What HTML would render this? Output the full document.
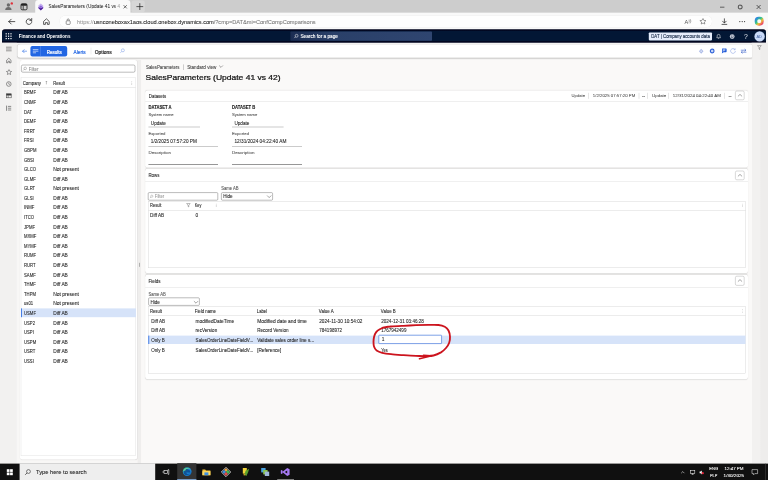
<!DOCTYPE html>
<html lang="en">
<head>
<meta charset="utf-8">
<title>SalesParameters (Update 41 vs 42)</title>
<style>
html,body{margin:0;padding:0;width:768px;height:480px;overflow:hidden;background:#f7f6f4;}
#s{position:absolute;left:0;top:0;width:1920px;height:1200px;transform:scale(.4);transform-origin:0 0;
  font-family:"Liberation Sans",sans-serif;font-size:12.5px;color:#242424;background:#f8f7f6;overflow:hidden;}
#s *{box-sizing:border-box;}
.a{position:absolute;}
.t{position:absolute;white-space:nowrap;line-height:1;-webkit-text-stroke:0.2px;}
.card{position:absolute;background:#fff;border-radius:6px;box-shadow:0 0 2.5px rgba(0,0,0,.13);}
.hl{position:absolute;height:1px;background:#d6d6d6;}
.ul{position:absolute;height:1.5px;background:#7a7a7a;}
.sep{position:absolute;width:1px;background:#c8c8c8;}
svg{overflow:visible;}
</style>
</head>
<body>
<div id="s">
<!-- ===== Browser tab strip ===== -->
<div class="a" style="left:0.0px;top:0.0px;width:1920.0px;height:32.0px;background:#cdcdcd;"></div>
<div class="a" style="left:329.0px;top:1.0px;width:33.0px;height:29.5px;background:#d7d7d7;border-radius:5px;"></div>
<div class="a" style="left:87.5px;top:0.0px;width:238.8px;height:33.0px;background:#f9f9f9;border-radius:8px 8px 0 0;"></div>
<svg class="a" style="left:10.0px;top:5.0px;" width="22" height="22" viewBox="0 0 22 22"><circle cx="11" cy="7.5" r="4.2" fill="#6b6b6b"/><path d="M3 20c0-5 3.5-7.5 8-7.5s8 2.500 8 7.500z" fill="#6b6b6b"/><circle cx="19.500" cy="3.500" r="3" fill="#e0303a"/></svg>
<svg class="a" style="left:50.5px;top:7.5px;" width="18" height="18" viewBox="0 0 18 18"><rect x="1.500" y="1.500" width="15" height="15" rx="3" fill="none" stroke="#222" stroke-width="2.200"/><rect x="1.500" y="1.500" width="15" height="5" rx="2" fill="#222"/><line x1="7" y1="6" x2="7" y2="16" stroke="#222" stroke-width="2"/></svg>
<svg class="a" style="left:95.5px;top:8.5px;" width="12" height="17" viewBox="0 0 12 17"><path d="M6 0l6 4.500v5L6 14 0 9.500v-5z" fill="#c4aef0"/><path d="M0 8.500l6 3 6-3v3L6 17 0 11.500z" fill="#4f1f9e"/><path d="M6 5l4 3-4 3.500L2 8z" fill="#8a63d9"/></svg>
<div class="t" style="left:120.5px;top:10px;font-size:12px;color:#1f1f1f;-webkit-text-stroke:0.1px;width:188px;overflow:hidden;-webkit-mask-image:linear-gradient(90deg,#000 86%,transparent);mask-image:linear-gradient(90deg,#000 86%,transparent);">SalesParameters (Update 41 vs 4</div>
<svg class="a" style="left:307.5px;top:12.0px;" width="10" height="10" viewBox="0 0 10 10"><path d="M1 1l8 8M9 1l-8 8" stroke="#222" stroke-width="1.600" fill="none"/></svg>
<svg class="a" style="left:340.5px;top:7.5px;" width="17" height="17" viewBox="0 0 17 17"><path d="M8.500 0v17M0 8.500h17" stroke="#222" stroke-width="1.800" fill="none"/></svg>
<svg class="a" style="left:1799.5px;top:16.5px;" width="11" height="2" viewBox="0 0 11 2"><rect width="11" height="1.600" fill="#222"/></svg>
<svg class="a" style="left:1845.0px;top:11.8px;" width="11" height="11" viewBox="0 0 11 11"><rect x="1" y="1" width="9" height="9" rx="2.500" fill="none" stroke="#222" stroke-width="2"/></svg>
<svg class="a" style="left:1891.0px;top:12.0px;" width="11" height="11" viewBox="0 0 11 11"><path d="M0.500 0.500l10 10M10.500 0.500l-10 10" stroke="#222" stroke-width="1.700" fill="none"/></svg>
<!-- ===== Browser toolbar ===== -->
<div class="a" style="left:0.0px;top:31.5px;width:1920.0px;height:41.5px;background:#f9f9f9;"></div>
<div class="a" style="left:148.5px;top:39.0px;width:1631.5px;height:29.0px;background:#fefefe;border-radius:14px;box-shadow:0 0 1px rgba(0,0,0,.12);"></div>
<svg class="a" style="left:19.8px;top:46.8px;" width="18" height="14" viewBox="0 0 18 14"><path d="M17 7H2M8 1L2 7l6 6" stroke="#222" stroke-width="1.900" fill="none" stroke-linecap="round" stroke-linejoin="round"/></svg>
<svg class="a" style="left:64.0px;top:45.0px;" width="17" height="17" viewBox="0 0 17 17"><path d="M14.500 5.500A7 7 0 1 0 15.500 9" stroke="#222" stroke-width="1.900" fill="none" stroke-linecap="round"/><path d="M15.300 1.200v4.800h-4.800" stroke="#222" stroke-width="1.900" fill="none" stroke-linecap="round" stroke-linejoin="round"/></svg>
<svg class="a" style="left:107.2px;top:45.0px;" width="18" height="17" viewBox="0 0 18 17"><path d="M2 8.500L9 2l7 6.500V16h-4.500v-4.500h-5V16H2z" stroke="#222" stroke-width="1.800" fill="none" stroke-linejoin="round"/></svg>
<svg class="a" style="left:163.5px;top:46.0px;" width="13" height="16" viewBox="0 0 13 16"><rect x="1.500" y="6" width="10" height="9" rx="2" fill="none" stroke="#555" stroke-width="1.500"/><path d="M3.800 6V4a2.700 2.700 0 0 1 5.400 0v2" fill="none" stroke="#555" stroke-width="1.500"/></svg>
<div class="t" style="left:192.5px;top:48px;font-size:14.25px;color:#242424;letter-spacing:-0.15px;-webkit-text-stroke:0.12px;"><span style="color:#9a9a9a">https://</span><span style="color:#1b1b1b">usnconeboxax1aos.cloud.onebox.dynamics.com</span><span style="color:#767676">/?cmp=DAT&amp;mi=ConfCompComparisons</span></div>
<svg class="a" style="left:1710.5px;top:45.8px;" width="17" height="15" viewBox="0 0 17 15"><text x="0" y="13" font-family="Liberation Sans,sans-serif" font-size="14" fill="#555">A</text><path d="M11 3.500q3 3 0 7M14 1.500q4.500 5 0 11" stroke="#555" stroke-width="1.200" fill="none"/></svg>
<svg class="a" style="left:1749.0px;top:45.2px;" width="17" height="16" viewBox="0 0 17 16"><path d="M8.500 1.300l2.200 4.700 5.100.600-3.800 3.500 1 5-4.500-2.500-4.500 2.500 1-5L.7 6.600l5.100-.6z" stroke="#555" stroke-width="1.400" fill="none" stroke-linejoin="round"/></svg>
<svg class="a" style="left:1804.2px;top:45.8px;" width="14" height="16" viewBox="0 0 14 16"><path d="M7 1v10M2.500 7L7 11.500 11.500 7M1 15h12" stroke="#222" stroke-width="1.800" fill="none" stroke-linecap="round" stroke-linejoin="round"/></svg>
<svg class="a" style="left:1848.0px;top:52.0px;" width="15" height="4" viewBox="0 0 15 4"><circle cx="1.500" cy="2" r="1.400" fill="#222"/><circle cx="7.500" cy="2" r="1.400" fill="#222"/><circle cx="13.500" cy="2" r="1.400" fill="#222"/></svg>
<svg class="a" style="left:1885.5px;top:41.0px;" width="24" height="24" viewBox="0 0 24 24"><defs><linearGradient id="cp" x1="0" y1="0" x2="1" y2="1"><stop offset="0" stop-color="#2b7fe8"/><stop offset=".4" stop-color="#35c58a"/><stop offset=".65" stop-color="#f2c035"/><stop offset="1" stop-color="#e8356f"/></linearGradient></defs><rect x="4" y="4" width="16" height="16" rx="7" fill="none" stroke="url(#cp)" stroke-width="6.500"/></svg>
<!-- ===== Finance and Operations header ===== -->
<div class="a" style="left:5.0px;top:73.0px;width:1910.0px;height:33.8px;background:linear-gradient(180deg,#01041d 0,#01041d 3px,#031735 4.500px,#031735 28.500px,#01051f 30.500px,#01051f 100%);border-radius:7px 7px 0 0;"></div>
<svg class="a" style="left:13.8px;top:82.5px;" width="15" height="15" viewBox="0 0 15 15"><rect x="0" y="0" width="3" height="3" fill="#fff"/><rect x="0" y="6" width="3" height="3" fill="#fff"/><rect x="0" y="12" width="3" height="3" fill="#fff"/><rect x="6" y="0" width="3" height="3" fill="#fff"/><rect x="6" y="6" width="3" height="3" fill="#fff"/><rect x="6" y="12" width="3" height="3" fill="#fff"/><rect x="12" y="0" width="3" height="3" fill="#fff"/><rect x="12" y="6" width="3" height="3" fill="#fff"/><rect x="12" y="12" width="3" height="3" fill="#fff"/></svg>
<div class="t" style="left:47.0px;top:85px;font-size:12.5px;color:#fff;font-weight:bold;-webkit-text-stroke:0;transform:scaleX(0.906);transform-origin:0 50%;">Finance and Operations</div>
<div class="a" style="left:725.5px;top:79.0px;width:354.5px;height:23.0px;background:linear-gradient(90deg,#1b2c52,#2a4069 30%,#2f4570);border-radius:2px;"></div>
<svg class="a" style="left:735.0px;top:84.8px;" width="11" height="11" viewBox="0 0 11 11"><circle cx="6.500" cy="4.500" r="3.600" stroke="#fff" stroke-width="1.300" fill="none"/><path d="M4 7L.8 10.200" stroke="#fff" stroke-width="1.400"/></svg>
<div class="t" style="left:751.0px;top:85px;font-size:12px;color:#fff;-webkit-text-stroke:0.3px #fff;transform:scaleX(0.985);transform-origin:0 50%;">Search for a page</div>
<div class="a" style="left:1622.0px;top:80.5px;width:158.0px;height:20.5px;background:#e6edfb;border-radius:2px;"></div>
<div class="t" style="left:1628.0px;top:85px;font-size:11.5px;color:#031735;transform:scaleX(0.943);transform-origin:0 50%;">DAT | Company accounts data</div>
<svg class="a" style="left:1791.0px;top:84.8px;" width="11" height="12" viewBox="0 0 11 12"><path d="M5.500 1a3.600 3.600 0 0 0-3.600 3.600V7.500L.8 9.300h9.400L9.100 7.500V4.600A3.600 3.600 0 0 0 5.500 1z" stroke="#fff" stroke-width="1.300" fill="none"/><path d="M4.200 10.500a1.400 1.400 0 0 0 2.600 0" stroke="#fff" stroke-width="1.200" fill="none"/></svg>
<svg class="a" style="left:1823.5px;top:84.5px;" width="13" height="13" viewBox="0 0 13 13"><circle cx="6.500" cy="6.500" r="6" fill="#c5cad6"/><circle cx="4.300" cy="5" r="1" fill="#031735"/><circle cx="8.700" cy="5" r="1" fill="#031735"/><path d="M3.500 7.800q3 2.800 6 0" stroke="#031735" stroke-width="1.200" fill="none"/></svg>
<div class="t" style="left:1859.8px;top:84px;font-size:17px;color:#e8eaf0;-webkit-text-stroke:0;">?</div>
<div class="a" style="left:1885.8px;top:77.5px;width:26.5px;height:26.5px;background:#c9daf8;border-radius:50%;"></div>
<div class="t" style="left:1891.0px;top:86px;font-size:10px;color:#3f5f9f;letter-spacing:-0.3px;-webkit-text-stroke:0;">AD</div>
<!-- ===== navigation rail ===== -->
<div class="a" style="left:0.0px;top:106.8px;width:41.5px;height:1051.2px;background:#f2f1f0;"></div>
<div class="a" style="left:1879.0px;top:106.8px;width:41.0px;height:1051.2px;background:linear-gradient(90deg,#f2f1f0 0,#f2f1f0 52%,#eeedec 56%,#eeedec 100%);"></div>
<svg class="a" style="left:15.0px;top:117.0px;" width="14" height="11" viewBox="0 0 14 11"><path d="M0 1h14M0 5.500h14M0 10h14" stroke="#3b3b3b" stroke-width="1.300"/></svg>
<svg class="a" style="left:15.0px;top:143.5px;" width="14" height="14" viewBox="0 0 14 14"><path d="M1.500 6.500L7 1.500l5.500 5V13h-3.700V9H5.200v4H1.500z" stroke="#3b3b3b" stroke-width="1.300" fill="none" stroke-linejoin="round"/></svg>
<svg class="a" style="left:14.5px;top:173.0px;" width="15" height="14" viewBox="0 0 15 14"><path d="M7.500 1l1.900 4.200 4.600.500-3.400 3.100.9 4.500-4-2.300-4 2.300.9-4.500L1 5.700l4.600-.5z" stroke="#3b3b3b" stroke-width="1.200" fill="none" stroke-linejoin="round"/></svg>
<svg class="a" style="left:15.0px;top:203.0px;" width="14" height="14" viewBox="0 0 14 14"><circle cx="7" cy="7" r="5.800" stroke="#3b3b3b" stroke-width="1.300" fill="none"/><path d="M7 3.500V7.300l2.500 1.500" stroke="#3b3b3b" stroke-width="1.300" fill="none"/></svg>
<svg class="a" style="left:15.0px;top:232.5px;" width="14" height="13" viewBox="0 0 14 13"><rect x="1" y="1.500" width="12" height="10" stroke="#3b3b3b" stroke-width="1.300" fill="none"/><path d="M1 5h12M5.500 5v6.500" stroke="#3b3b3b" stroke-width="1.300"/><rect x="1" y="1.500" width="12" height="3.500" fill="#3b3b3b"/></svg>
<svg class="a" style="left:15.0px;top:263.5px;" width="14" height="13" viewBox="0 0 14 13"><path d="M1.500 0v13" stroke="#3b3b3b" stroke-width="1.500"/><path d="M5 2h8M5 6.500h8M5 11h8" stroke="#3b3b3b" stroke-width="1.400"/></svg>
<svg class="a" style="left:1893.2px;top:112.8px;" width="11" height="12" viewBox="0 0 11 12"><path d="M.8 1h9.400L6.500 5.600V11L4.500 9.600V5.600z" stroke="#555" stroke-width="1.100" fill="none" stroke-linejoin="round"/></svg>
<!-- ===== action bar ===== -->
<div class="a" style="left:44.0px;top:111.0px;width:1835.5px;height:33.0px;background:#fff;border-radius:6px 3px 3px 6px;box-shadow:0 1px 3px rgba(0,0,0,.16);"></div>
<svg class="a" style="left:54.5px;top:122.5px;" width="12" height="10" viewBox="0 0 12 10"><path d="M11.500 5H1.500M5.500 1L1.500 5l4 4" stroke="#2266e3" stroke-width="1.400" fill="none" stroke-linecap="round" stroke-linejoin="round"/></svg>
<div class="a" style="left:76.0px;top:115.2px;width:92.0px;height:26.2px;background:#2266e3;border-radius:5px;"></div>
<svg class="a" style="left:81.5px;top:122.8px;" width="14" height="10" viewBox="0 0 14 10"><path d="M0 1h14M0 5h14M0 9h8" stroke="#fff" stroke-width="1.500"/></svg>
<div class="a" style="left:100.0px;top:115.2px;width:1.0px;height:26.2px;background:#6f9cf0;"></div>
<div class="t" style="left:116.5px;top:125px;font-size:12px;color:#fff;-webkit-text-stroke:0.5px #fff;transform:scaleX(0.937);transform-origin:0 50%;">Results</div>
<div class="t" style="left:183.8px;top:125px;font-size:12px;color:#2266e3;-webkit-text-stroke:0.45px #2266e3;transform:scaleX(0.978);transform-origin:0 50%;">Alerts</div>
<div class="a" style="left:227.0px;top:118.8px;width:1.0px;height:17.5px;background:#d8d8d8;"></div>
<div class="t" style="left:237.2px;top:125px;font-size:12px;color:#242424;-webkit-text-stroke:0.5px #242424;transform:scaleX(1.022);transform-origin:0 50%;">Options</div>
<svg class="a" style="left:299.8px;top:121.0px;" width="12" height="12" viewBox="0 0 12 12"><circle cx="7.200" cy="4.800" r="3.800" stroke="#7d9fe6" stroke-width="1.300" fill="none"/><path d="M4.500 7.500L1 11" stroke="#7d9fe6" stroke-width="1.400"/></svg>
<svg class="a" style="left:1746.0px;top:120.5px;" width="14" height="14" viewBox="0 0 14 14"><path d="M7 .8l5.800 6.200L7 13.200 1.200 7z" fill="#aebde8"/><circle cx="7" cy="7" r="2.200" fill="#d5ddf4"/></svg>
<svg class="a" style="left:1774.2px;top:121.0px;" width="13" height="13" viewBox="0 0 13 13"><circle cx="6.500" cy="6.500" r="4.600" fill="#c9d8f7" stroke="#2f62d8" stroke-width="2.800"/></svg>
<svg class="a" style="left:1803.0px;top:119.5px;" width="14" height="15" viewBox="0 0 14 15"><path d="M2.500 1h9.500a1.500 1.500 0 0 1 1.500 1.500v6.500a1.500 1.500 0 0 1-1.500 1.500H6l-4.500 3.500 1-4.500V2.500A1.500 1.500 0 0 1 2.500 1z" fill="#1e58d8"/><path d="M6 8.500V3.200h2.300a1.700 1.700 0 0 1 0 3.400H6" stroke="#fff" stroke-width="1.400" fill="none"/></svg>
<svg class="a" style="left:1824.8px;top:120.0px;" width="15" height="15" viewBox="0 0 15 15"><path d="M12.300 3.800A6 6 0 1 0 13.500 7.500" stroke="#7f9be0" stroke-width="1.300" fill="none"/><path d="M13 .8v3.600H9.400" stroke="#7f9be0" stroke-width="1.300" fill="none"/></svg>
<svg class="a" style="left:1852.2px;top:121.5px;" width="14" height="12" viewBox="0 0 14 12"><path d="M0 3.500h13M9.500.5l3.500 3-3.500 3M14 8.500H1M4.500 5.500L1 8.500l3.500 3" stroke="#2a55c4" stroke-width="1.400" fill="none"/></svg>
<!-- ===== company list pane ===== -->
<div class="card" style="left:50.0px;top:149.5px;width:293.0px;height:999.0px;"></div>
<div class="a" style="left:344.0px;top:149.5px;width:8.5px;height:1009.5px;background:#efeeed;"></div>
<div class="a" style="left:347.5px;top:656.5px;width:1.2px;height:10.5px;background:#555;"></div>
<div class="a" style="left:53.0px;top:162.2px;width:285.0px;height:19.2px;background:#fff;border:1.5px solid #555;border-radius:4px;"></div>
<svg class="a" style="left:56.5px;top:167.0px;" width="10" height="10" viewBox="0 0 10 10"><circle cx="6" cy="4" r="3.200" stroke="#777" stroke-width="1.100" fill="none"/><path d="M3.800 6.200L.8 9.200" stroke="#777" stroke-width="1.200"/></svg>
<div class="t" style="left:71.5px;top:168px;font-size:12px;color:#8a8a8a;transform:scaleX(0.900);transform-origin:0 50%;">Filter</div>
<div class="a" style="left:52.0px;top:193.2px;width:287.2px;height:947.2px;border:1px solid #dcdcdc;"></div>
<div class="t" style="left:57.0px;top:202px;font-size:12px;color:#242424;transform:scaleX(0.886);transform-origin:0 50%;">Company</div>
<svg class="a" style="left:113.0px;top:201.5px;" width="6" height="10" viewBox="0 0 6 10"><path d="M3 1v8M1 3l2-2 2 2" stroke="#666" stroke-width="1" fill="none"/></svg>
<div class="t" style="left:132.5px;top:202px;font-size:12px;color:#242424;transform:scaleX(0.864);transform-origin:0 50%;">Result</div>
<svg class="a" style="left:327.5px;top:203.0px;" width="3" height="10" viewBox="0 0 3 10"><circle cx="1.500" cy="1.500" r="1" fill="#999"/><circle cx="1.500" cy="5" r="1" fill="#999"/><circle cx="1.500" cy="8.500" r="1" fill="#999"/></svg>
<div class="a" style="left:52.5px;top:217.5px;width:286.5px;height:1.0px;background:#d0d0d0;"></div>
<div class="t" style="left:59.5px;top:225px;font-size:12px;color:#242424;transform:scaleX(0.880);transform-origin:0 50%;">BRMF</div>
<div class="t" style="left:132.5px;top:225px;font-size:12px;color:#242424;transform:scaleX(1.001);transform-origin:0 50%;">Diff AB</div>
<div class="t" style="left:59.5px;top:250px;font-size:12px;color:#242424;transform:scaleX(0.880);transform-origin:0 50%;">CNMF</div>
<div class="t" style="left:132.5px;top:250px;font-size:12px;color:#242424;transform:scaleX(1.001);transform-origin:0 50%;">Diff AB</div>
<div class="t" style="left:59.5px;top:275px;font-size:12px;color:#242424;transform:scaleX(0.880);transform-origin:0 50%;">DAT</div>
<div class="t" style="left:132.5px;top:275px;font-size:12px;color:#242424;transform:scaleX(1.001);transform-origin:0 50%;">Diff AB</div>
<div class="t" style="left:59.5px;top:298px;font-size:12px;color:#242424;transform:scaleX(0.880);transform-origin:0 50%;">DEMF</div>
<div class="t" style="left:132.5px;top:298px;font-size:12px;color:#242424;transform:scaleX(1.001);transform-origin:0 50%;">Diff AB</div>
<div class="t" style="left:59.5px;top:322px;font-size:12px;color:#242424;transform:scaleX(0.880);transform-origin:0 50%;">FRRT</div>
<div class="t" style="left:132.5px;top:322px;font-size:12px;color:#242424;transform:scaleX(1.001);transform-origin:0 50%;">Diff AB</div>
<div class="t" style="left:59.5px;top:345px;font-size:12px;color:#242424;transform:scaleX(0.880);transform-origin:0 50%;">FRSI</div>
<div class="t" style="left:132.5px;top:345px;font-size:12px;color:#242424;transform:scaleX(1.001);transform-origin:0 50%;">Diff AB</div>
<div class="t" style="left:59.5px;top:370px;font-size:12px;color:#242424;transform:scaleX(0.880);transform-origin:0 50%;">GBPM</div>
<div class="t" style="left:132.5px;top:370px;font-size:12px;color:#242424;transform:scaleX(1.001);transform-origin:0 50%;">Diff AB</div>
<div class="t" style="left:59.5px;top:395px;font-size:12px;color:#242424;transform:scaleX(0.880);transform-origin:0 50%;">GBSI</div>
<div class="t" style="left:132.5px;top:395px;font-size:12px;color:#242424;transform:scaleX(1.001);transform-origin:0 50%;">Diff AB</div>
<div class="t" style="left:59.5px;top:418px;font-size:12px;color:#242424;transform:scaleX(0.880);transform-origin:0 50%;">GLCO</div>
<div class="t" style="left:132.5px;top:418px;font-size:12px;color:#242424;transform:scaleX(1.038);transform-origin:0 50%;">Not present</div>
<div class="t" style="left:59.5px;top:442px;font-size:12px;color:#242424;transform:scaleX(0.880);transform-origin:0 50%;">GLMF</div>
<div class="t" style="left:132.5px;top:442px;font-size:12px;color:#242424;transform:scaleX(1.001);transform-origin:0 50%;">Diff AB</div>
<div class="t" style="left:59.5px;top:465px;font-size:12px;color:#242424;transform:scaleX(0.880);transform-origin:0 50%;">GLRT</div>
<div class="t" style="left:132.5px;top:465px;font-size:12px;color:#242424;transform:scaleX(1.038);transform-origin:0 50%;">Not present</div>
<div class="t" style="left:59.5px;top:490px;font-size:12px;color:#242424;transform:scaleX(0.880);transform-origin:0 50%;">GLSI</div>
<div class="t" style="left:132.5px;top:490px;font-size:12px;color:#242424;transform:scaleX(1.001);transform-origin:0 50%;">Diff AB</div>
<div class="t" style="left:59.5px;top:512px;font-size:12px;color:#242424;transform:scaleX(0.880);transform-origin:0 50%;">INMF</div>
<div class="t" style="left:132.5px;top:512px;font-size:12px;color:#242424;transform:scaleX(1.001);transform-origin:0 50%;">Diff AB</div>
<div class="t" style="left:59.5px;top:538px;font-size:12px;color:#242424;transform:scaleX(0.880);transform-origin:0 50%;">ITCO</div>
<div class="t" style="left:132.5px;top:538px;font-size:12px;color:#242424;transform:scaleX(1.001);transform-origin:0 50%;">Diff AB</div>
<div class="t" style="left:59.5px;top:562px;font-size:12px;color:#242424;transform:scaleX(0.880);transform-origin:0 50%;">JPMF</div>
<div class="t" style="left:132.5px;top:562px;font-size:12px;color:#242424;transform:scaleX(1.001);transform-origin:0 50%;">Diff AB</div>
<div class="t" style="left:59.5px;top:585px;font-size:12px;color:#242424;transform:scaleX(0.880);transform-origin:0 50%;">MXMF</div>
<div class="t" style="left:132.5px;top:585px;font-size:12px;color:#242424;transform:scaleX(1.001);transform-origin:0 50%;">Diff AB</div>
<div class="t" style="left:59.5px;top:610px;font-size:12px;color:#242424;transform:scaleX(0.880);transform-origin:0 50%;">MYMF</div>
<div class="t" style="left:132.5px;top:610px;font-size:12px;color:#242424;transform:scaleX(1.001);transform-origin:0 50%;">Diff AB</div>
<div class="t" style="left:59.5px;top:632px;font-size:12px;color:#242424;transform:scaleX(0.880);transform-origin:0 50%;">RUMF</div>
<div class="t" style="left:132.5px;top:632px;font-size:12px;color:#242424;transform:scaleX(1.001);transform-origin:0 50%;">Diff AB</div>
<div class="t" style="left:59.5px;top:658px;font-size:12px;color:#242424;transform:scaleX(0.880);transform-origin:0 50%;">RURT</div>
<div class="t" style="left:132.5px;top:658px;font-size:12px;color:#242424;transform:scaleX(1.001);transform-origin:0 50%;">Diff AB</div>
<div class="t" style="left:59.5px;top:682px;font-size:12px;color:#242424;transform:scaleX(0.880);transform-origin:0 50%;">SAMF</div>
<div class="t" style="left:132.5px;top:682px;font-size:12px;color:#242424;transform:scaleX(1.001);transform-origin:0 50%;">Diff AB</div>
<div class="t" style="left:59.5px;top:705px;font-size:12px;color:#242424;transform:scaleX(0.880);transform-origin:0 50%;">THMF</div>
<div class="t" style="left:132.5px;top:705px;font-size:12px;color:#242424;transform:scaleX(1.001);transform-origin:0 50%;">Diff AB</div>
<div class="t" style="left:59.5px;top:730px;font-size:12px;color:#242424;transform:scaleX(0.880);transform-origin:0 50%;">THPM</div>
<div class="t" style="left:132.5px;top:730px;font-size:12px;color:#242424;transform:scaleX(1.038);transform-origin:0 50%;">Not present</div>
<div class="t" style="left:59.5px;top:752px;font-size:12px;color:#242424;transform:scaleX(0.880);transform-origin:0 50%;">us01</div>
<div class="t" style="left:132.5px;top:752px;font-size:12px;color:#242424;transform:scaleX(1.038);transform-origin:0 50%;">Not present</div>
<div class="a" style="left:52.5px;top:770.8px;width:287.0px;height:22.2px;background:#d6e3f9;"></div>
<div class="a" style="left:52.5px;top:770.8px;width:2.0px;height:22.2px;background:#2266e3;"></div>
<div class="t" style="left:59.5px;top:778px;font-size:12px;color:#242424;transform:scaleX(0.880);transform-origin:0 50%;">USMF</div>
<div class="t" style="left:132.5px;top:778px;font-size:12px;color:#242424;transform:scaleX(1.001);transform-origin:0 50%;">Diff AB</div>
<div class="t" style="left:59.5px;top:802px;font-size:12px;color:#242424;transform:scaleX(0.880);transform-origin:0 50%;">USP2</div>
<div class="t" style="left:132.5px;top:802px;font-size:12px;color:#242424;transform:scaleX(1.001);transform-origin:0 50%;">Diff AB</div>
<div class="t" style="left:59.5px;top:825px;font-size:12px;color:#242424;transform:scaleX(0.880);transform-origin:0 50%;">USPI</div>
<div class="t" style="left:132.5px;top:825px;font-size:12px;color:#242424;transform:scaleX(1.001);transform-origin:0 50%;">Diff AB</div>
<div class="t" style="left:59.5px;top:850px;font-size:12px;color:#242424;transform:scaleX(0.880);transform-origin:0 50%;">USPM</div>
<div class="t" style="left:132.5px;top:850px;font-size:12px;color:#242424;transform:scaleX(1.001);transform-origin:0 50%;">Diff AB</div>
<div class="t" style="left:59.5px;top:872px;font-size:12px;color:#242424;transform:scaleX(0.880);transform-origin:0 50%;">USRT</div>
<div class="t" style="left:132.5px;top:872px;font-size:12px;color:#242424;transform:scaleX(1.001);transform-origin:0 50%;">Diff AB</div>
<div class="t" style="left:59.5px;top:898px;font-size:12px;color:#242424;transform:scaleX(0.880);transform-origin:0 50%;">USSI</div>
<div class="t" style="left:132.5px;top:898px;font-size:12px;color:#242424;transform:scaleX(1.001);transform-origin:0 50%;">Diff AB</div>
<!-- ===== main content ===== -->
<div class="a" style="left:352.5px;top:149.5px;width:1527.5px;height:1008.5px;background:#faf9f8;"></div>
<div class="t" style="left:365.0px;top:162px;font-size:12px;color:#424242;transform:scaleX(0.910);transform-origin:0 50%;">SalesParameters</div>
<div class="a" style="left:459.0px;top:160.5px;width:1.0px;height:14.0px;background:#8a8a8a;"></div>
<div class="t" style="left:468.2px;top:162px;font-size:12px;color:#424242;transform:scaleX(0.960);transform-origin:0 50%;">Standard view</div>
<svg class="a" style="left:546.5px;top:162.8px;" width="11" height="6.5" viewBox="0 0 11 6.5"><path d="M.8.8L5.500 5.500 10.200.8" stroke="#424242" stroke-width="1.200" fill="none"/></svg>
<div class="t" style="left:364.0px;top:183px;font-size:19.5px;color:#141414;-webkit-text-stroke:0.6px #141414;transform:scaleX(1.089);transform-origin:0 50%;">SalesParameters (Update 41 vs 42)</div>
<!-- Datasets -->
<div class="card" style="left:362.5px;top:226.0px;width:1507.5px;height:193.0px;"></div>
<div class="t" style="left:371.5px;top:235px;font-size:12px;color:#242424;transform:scaleX(0.919);transform-origin:0 50%;">Datasets</div>
<div class="a" style="left:362.5px;top:253.2px;width:1507.5px;height:1.0px;background:#d8d8d8;"></div>
<div class="t" style="left:1428.5px;top:233px;font-size:11px;color:#4a4a4a;-webkit-text-stroke:0.1px;transform:scaleX(0.951);transform-origin:0 50%;">Update</div>
<div class="t" style="left:1482.0px;top:233px;font-size:11px;color:#4a4a4a;-webkit-text-stroke:0.1px;transform:scaleX(0.982);transform-origin:0 50%;">1/2/2025 07:57:20 PM</div>
<div class="t" style="left:1604.5px;top:233px;font-size:11px;color:#4a4a4a;-webkit-text-stroke:0.1px;transform:scaleX(1.092);transform-origin:0 50%;">--</div>
<div class="t" style="left:1630.0px;top:233px;font-size:11px;color:#4a4a4a;-webkit-text-stroke:0.1px;transform:scaleX(1.008);transform-origin:0 50%;">Update</div>
<div class="t" style="left:1681.5px;top:233px;font-size:11px;color:#4a4a4a;-webkit-text-stroke:0.1px;transform:scaleX(1.001);transform-origin:0 50%;">12/31/2024 04:22:40 AM</div>
<div class="t" style="left:1821.0px;top:233px;font-size:11px;color:#4a4a4a;-webkit-text-stroke:0.1px;transform:scaleX(1.092);transform-origin:0 50%;">--</div>
<div class="a" style="left:1471.2px;top:231.5px;width:1.0px;height:15.0px;background:#bdbdbd;"></div>
<div class="a" style="left:1596.8px;top:231.5px;width:1.0px;height:15.0px;background:#bdbdbd;"></div>
<div class="a" style="left:1619.2px;top:231.5px;width:1.0px;height:15.0px;background:#bdbdbd;"></div>
<div class="a" style="left:1670.2px;top:231.5px;width:1.0px;height:15.0px;background:#bdbdbd;"></div>
<div class="a" style="left:1810.8px;top:231.5px;width:1.0px;height:15.0px;background:#bdbdbd;"></div>
<div class="a" style="left:1838.0px;top:226.8px;width:23.0px;height:23.5px;background:#fff;border:1px solid #a0a0a0;border-radius:4px;"></div>
<svg class="a" style="left:1843.5px;top:234.5px;" width="12" height="7" viewBox="0 0 12 7"><path d="M.8 6L6 1l5.200 5" stroke="#424242" stroke-width="1.200" fill="none"/></svg>
<div class="t" style="left:370.8px;top:263px;font-size:11.5px;color:#1b1b1b;font-weight:bold;-webkit-text-stroke:0;-webkit-text-stroke:0.3px #1b1b1b;transform:scaleX(0.911);transform-origin:0 50%;">DATASET A</div>
<div class="t" style="left:370.8px;top:280px;font-size:11px;color:#555;transform:scaleX(0.937);transform-origin:0 50%;">System name</div>
<div class="t" style="left:376.8px;top:302px;font-size:12px;color:#242424;transform:scaleX(0.969);transform-origin:0 50%;">Update</div>
<div class="a" style="left:370.8px;top:316.5px;width:129.0px;height:1.5px;background:#7d7d7d;"></div>
<div class="t" style="left:370.8px;top:328px;font-size:11px;color:#555;transform:scaleX(0.965);transform-origin:0 50%;">Exported</div>
<div class="t" style="left:376.8px;top:348px;font-size:12px;color:#242424;transform:scaleX(0.974);transform-origin:0 50%;">1/2/2025 07:57:20 PM</div>
<div class="a" style="left:370.8px;top:364.5px;width:174.5px;height:1.5px;background:#7d7d7d;"></div>
<div class="t" style="left:370.8px;top:376px;font-size:11px;color:#555;transform:scaleX(1.027);transform-origin:0 50%;">Description</div>
<div class="a" style="left:370.8px;top:410.0px;width:174.5px;height:1.5px;background:#7d7d7d;"></div>
<div class="t" style="left:580.0px;top:263px;font-size:11.5px;color:#1b1b1b;font-weight:bold;-webkit-text-stroke:0;-webkit-text-stroke:0.3px #1b1b1b;transform:scaleX(0.905);transform-origin:0 50%;">DATASET B</div>
<div class="t" style="left:580.0px;top:280px;font-size:11px;color:#555;transform:scaleX(0.937);transform-origin:0 50%;">System name</div>
<div class="t" style="left:586.0px;top:302px;font-size:12px;color:#242424;transform:scaleX(0.969);transform-origin:0 50%;">Update</div>
<div class="a" style="left:580.0px;top:316.5px;width:129.0px;height:1.5px;background:#7d7d7d;"></div>
<div class="t" style="left:580.0px;top:328px;font-size:11px;color:#555;transform:scaleX(0.965);transform-origin:0 50%;">Exported</div>
<div class="t" style="left:586.0px;top:348px;font-size:12px;color:#242424;transform:scaleX(0.994);transform-origin:0 50%;">12/31/2024 04:22:40 AM</div>
<div class="a" style="left:580.0px;top:364.5px;width:174.5px;height:1.5px;background:#7d7d7d;"></div>
<div class="t" style="left:580.0px;top:376px;font-size:11px;color:#555;transform:scaleX(1.027);transform-origin:0 50%;">Description</div>
<div class="a" style="left:580.0px;top:410.0px;width:174.5px;height:1.5px;background:#7d7d7d;"></div>
<!-- Rows -->
<div class="card" style="left:362.5px;top:421.5px;width:1507.5px;height:261.0px;"></div>
<div class="t" style="left:370.8px;top:432px;font-size:12px;color:#242424;transform:scaleX(0.916);transform-origin:0 50%;">Rows</div>
<div class="a" style="left:362.5px;top:454.0px;width:1507.5px;height:1.0px;background:#d8d8d8;"></div>
<div class="a" style="left:1838.0px;top:426.8px;width:23.0px;height:23.5px;background:#fff;border:1px solid #a0a0a0;border-radius:4px;"></div>
<svg class="a" style="left:1843.5px;top:434.5px;" width="12" height="7" viewBox="0 0 12 7"><path d="M.8 6L6 1l5.200 5" stroke="#424242" stroke-width="1.200" fill="none"/></svg>
<div class="t" style="left:552.5px;top:465px;font-size:11.5px;color:#555;transform:scaleX(0.907);transform-origin:0 50%;">Same AB</div>
<div class="a" style="left:370.2px;top:481.0px;width:174.5px;height:20.0px;background:#fff;border:1.5px solid #555;border-radius:3px;"></div>
<svg class="a" style="left:373.5px;top:486.5px;" width="9" height="9" viewBox="0 0 9 9"><circle cx="5.500" cy="3.500" r="2.800" stroke="#888" stroke-width="1" fill="none"/><path d="M3.500 5.500L.8 8.200" stroke="#888" stroke-width="1.100"/></svg>
<div class="t" style="left:387.0px;top:485px;font-size:11.5px;color:#9a9a9a;transform:scaleX(0.920);transform-origin:0 50%;">Filter</div>
<div class="a" style="left:552.5px;top:481.0px;width:129.0px;height:20.0px;background:#fff;border:1.5px solid #555;border-radius:3px;"></div>
<div class="t" style="left:558.2px;top:485px;font-size:12px;color:#242424;transform:scaleX(0.952);transform-origin:0 50%;">Hide</div>
<svg class="a" style="left:666.5px;top:488.0px;" width="12" height="7" viewBox="0 0 12 7"><path d="M.8.8L6 6 11.200.8" stroke="#424242" stroke-width="1.200" fill="none"/></svg>
<div class="a" style="left:370.5px;top:502.5px;width:1494.5px;height:167.5px;background:#fff;border:1px solid #d0d0d0;"></div>
<div class="t" style="left:375.0px;top:508px;font-size:11.5px;color:#242424;transform:scaleX(0.874);transform-origin:0 50%;">Result</div>
<svg class="a" style="left:465.5px;top:508.0px;" width="10" height="10" viewBox="0 0 10 10"><path d="M.6.8h8.800L6 5v4.400L4 8V5z" stroke="#555" stroke-width="1" fill="none" stroke-linejoin="round"/></svg>
<div class="t" style="left:486.5px;top:508px;font-size:11.5px;color:#242424;transform:scaleX(0.833);transform-origin:0 50%;">Key</div>
<svg class="a" style="left:538.5px;top:509.0px;" width="3" height="9" viewBox="0 0 3 9"><circle cx="1.500" cy="1.200" r=".9" fill="#999"/><circle cx="1.500" cy="4.500" r=".9" fill="#999"/><circle cx="1.500" cy="7.800" r=".9" fill="#999"/></svg>
<svg class="a" style="left:1855.0px;top:509.0px;" width="3" height="9" viewBox="0 0 3 9"><circle cx="1.500" cy="1.200" r=".9" fill="#aaa"/><circle cx="1.500" cy="4.500" r=".9" fill="#aaa"/><circle cx="1.500" cy="7.800" r=".9" fill="#aaa"/></svg>
<div class="a" style="left:371.0px;top:524.8px;width:1493.0px;height:1.0px;background:#d0d0d0;"></div>
<div class="t" style="left:375.0px;top:532px;font-size:12px;color:#242424;transform:scaleX(0.974);transform-origin:0 50%;">Diff AB</div>
<div class="t" style="left:488.5px;top:532px;font-size:12px;color:#242424;">0</div>
<!-- Fields -->
<div class="card" style="left:362.5px;top:686.5px;width:1507.5px;height:261.2px;"></div>
<div class="t" style="left:370.5px;top:698px;font-size:12px;color:#242424;transform:scaleX(0.953);transform-origin:0 50%;">Fields</div>
<div class="a" style="left:362.5px;top:718.0px;width:1507.5px;height:1.0px;background:#d8d8d8;"></div>
<div class="a" style="left:1838.0px;top:690.2px;width:23.0px;height:23.5px;background:#fff;border:1px solid #a0a0a0;border-radius:4px;"></div>
<svg class="a" style="left:1843.5px;top:698.0px;" width="12" height="7" viewBox="0 0 12 7"><path d="M.8 6L6 1l5.200 5" stroke="#424242" stroke-width="1.200" fill="none"/></svg>
<div class="t" style="left:371.2px;top:730px;font-size:11.5px;color:#555;transform:scaleX(0.913);transform-origin:0 50%;">Same AB</div>
<div class="a" style="left:370.5px;top:744.2px;width:128.5px;height:20.0px;background:#fff;border:1.5px solid #555;border-radius:3px;"></div>
<div class="t" style="left:376.0px;top:750px;font-size:12px;color:#242424;transform:scaleX(0.952);transform-origin:0 50%;">Hide</div>
<svg class="a" style="left:483.5px;top:752.0px;" width="12" height="7" viewBox="0 0 12 7"><path d="M.8.8L6 6 11.200.8" stroke="#424242" stroke-width="1.200" fill="none"/></svg>
<div class="a" style="left:370.5px;top:766.0px;width:1494.5px;height:167.5px;background:#fff;border:1px solid #d0d0d0;"></div>
<div class="t" style="left:374.8px;top:773px;font-size:11.5px;color:#242424;transform:scaleX(0.905);transform-origin:0 50%;">Result</div>
<div class="t" style="left:487.2px;top:773px;font-size:11.5px;color:#242424;transform:scaleX(0.932);transform-origin:0 50%;">Field name</div>
<div class="t" style="left:641.5px;top:773px;font-size:11.5px;color:#242424;transform:scaleX(0.915);transform-origin:0 50%;">Label</div>
<div class="t" style="left:797.0px;top:773px;font-size:11.5px;color:#242424;transform:scaleX(0.960);transform-origin:0 50%;">Value A</div>
<div class="t" style="left:951.5px;top:773px;font-size:11.5px;color:#242424;transform:scaleX(0.945);transform-origin:0 50%;">Value B</div>
<svg class="a" style="left:1855.0px;top:772.5px;" width="3" height="9" viewBox="0 0 3 9"><circle cx="1.500" cy="1.200" r=".9" fill="#aaa"/><circle cx="1.500" cy="4.500" r=".9" fill="#aaa"/><circle cx="1.500" cy="7.800" r=".9" fill="#aaa"/></svg>
<div class="a" style="left:371.0px;top:788.0px;width:1493.0px;height:1.0px;background:#d0d0d0;"></div>
<div class="a" style="left:371.0px;top:838.5px;width:1493.0px;height:21.2px;background:#d6e3f9;"></div>
<div class="a" style="left:371.0px;top:838.5px;width:2.0px;height:21.2px;background:#2266e3;"></div>
<div class="t" style="left:377.5px;top:798px;font-size:12px;color:#242424;transform:scaleX(0.953);transform-origin:0 50%;">Diff AB</div>
<div class="t" style="left:488.5px;top:798px;font-size:12px;color:#242424;transform:scaleX(0.993);transform-origin:0 50%;">modifiedDateTime</div>
<div class="t" style="left:642.8px;top:798px;font-size:12px;color:#242424;transform:scaleX(1.021);transform-origin:0 50%;">Modified date and time</div>
<div class="t" style="left:798.2px;top:798px;font-size:12px;color:#242424;transform:scaleX(0.977);transform-origin:0 50%;">2024-11-30 10:54:02</div>
<div class="t" style="left:952.8px;top:798px;font-size:12px;color:#242424;transform:scaleX(0.958);transform-origin:0 50%;">2024-12-31 03:46:28</div>
<div class="t" style="left:377.5px;top:820px;font-size:12px;color:#242424;transform:scaleX(0.953);transform-origin:0 50%;">Diff AB</div>
<div class="t" style="left:488.5px;top:820px;font-size:12px;color:#242424;transform:scaleX(0.952);transform-origin:0 50%;">recVersion</div>
<div class="t" style="left:642.8px;top:820px;font-size:12px;color:#242424;transform:scaleX(0.954);transform-origin:0 50%;">Record Version</div>
<div class="t" style="left:798.2px;top:820px;font-size:12px;color:#242424;transform:scaleX(0.953);transform-origin:0 50%;">784198972</div>
<div class="t" style="left:952.8px;top:820px;font-size:12px;color:#242424;transform:scaleX(0.944);transform-origin:0 50%;">1767942499</div>
<div class="t" style="left:377.5px;top:845px;font-size:12px;color:#242424;transform:scaleX(0.937);transform-origin:0 50%;">Only B</div>
<div class="t" style="left:488.5px;top:845px;font-size:12px;color:#242424;transform:scaleX(0.950);transform-origin:0 50%;">SalesOrderLineDateFieldV...</div>
<div class="t" style="left:642.8px;top:845px;font-size:12px;color:#242424;transform:scaleX(0.973);transform-origin:0 50%;">Validate sales order line s...</div>
<div class="t" style="left:377.5px;top:870px;font-size:12px;color:#242424;transform:scaleX(0.937);transform-origin:0 50%;">Only B</div>
<div class="t" style="left:488.5px;top:870px;font-size:12px;color:#242424;transform:scaleX(0.950);transform-origin:0 50%;">SalesOrderLineDateFieldV...</div>
<div class="t" style="left:642.8px;top:870px;font-size:12px;color:#242424;transform:scaleX(0.967);transform-origin:0 50%;">[Reference]</div>
<div class="t" style="left:952.8px;top:870px;font-size:12px;color:#242424;transform:scaleX(0.830);transform-origin:0 50%;">Yes</div>
<div class="a" style="left:946.2px;top:837.2px;width:158.8px;height:22.5px;background:#fff;border:2.500px solid #5f8ae0;border-radius:2px;"></div>
<div class="t" style="left:954.5px;top:842px;font-size:12px;color:#242424;">1</div>
<svg class="a" style="left:0;top:0" width="1920" height="1200" viewBox="0 0 768 480"><path d="M382.2 327.8C383.7 327.6 387.4 326.8 391.0 326.5C394.6 326.2 399.3 326.0 403.5 325.8C407.7 325.6 411.8 325.4 416.0 325.2C420.2 325.0 424.8 324.9 428.5 324.9C432.2 324.9 435.8 324.7 438.5 325.0C441.2 325.3 443.1 325.9 444.8 326.8C446.5 327.7 447.6 328.8 448.5 330.5C449.4 332.2 449.9 334.7 450.0 336.8C450.1 338.9 449.8 341.1 449.1 343.0C448.4 344.9 447.4 346.4 446.0 348.0C444.6 349.6 443.1 351.1 441.0 352.4C438.9 353.6 436.0 354.9 433.5 355.5C431.0 356.1 428.9 356.0 426.0 356.1C423.1 356.2 419.8 356.0 416.0 355.9C412.2 355.8 407.7 355.5 403.5 355.2C399.3 354.9 394.6 354.6 391.0 354.2C387.4 353.8 384.6 353.4 382.2 352.8C379.8 352.2 378.0 351.5 376.6 350.5C375.2 349.5 374.6 348.2 374.1 346.8C373.6 345.4 373.5 343.5 373.5 341.8C373.5 340.1 373.7 338.4 374.1 336.8C374.5 335.2 375.1 333.7 376.0 332.4C376.9 331.1 378.3 330.0 379.8 329.2C381.3 328.4 382.9 327.9 384.8 327.4C386.7 326.9 390.0 326.6 391.0 326.4" stroke="#cc141e" stroke-width="1.850" fill="none" stroke-linecap="round" stroke-linejoin="round"/><path d="M423.500 355.300L430.800 355.900L419.500 358.800" stroke="#cc141e" stroke-width="1.600" fill="none" stroke-linecap="round" stroke-linejoin="round"/></svg>
<!-- ===== Windows taskbar ===== -->
<div class="a" style="left:0.0px;top:1158.8px;width:1920.0px;height:41.2px;background:#101010;"></div>
<svg class="a" style="left:17.0px;top:1172.5px;" width="15" height="15" viewBox="0 0 15 15"><rect x="0" y="0" width="6.800" height="6.800" fill="#fff"/><rect x="8.200" y="0" width="6.800" height="6.800" fill="#fff"/><rect x="0" y="8.200" width="6.800" height="6.800" fill="#fff"/><rect x="8.200" y="8.200" width="6.800" height="6.800" fill="#fff"/></svg>
<div class="a" style="left:49.0px;top:1159.0px;width:339.0px;height:41.0px;background:#eeeeee;border-top:1px solid #fafafa;"></div>
<svg class="a" style="left:61.5px;top:1172.5px;" width="15" height="15" viewBox="0 0 15 15"><circle cx="9.200" cy="5.800" r="4.800" stroke="#222" stroke-width="1.400" fill="none"/><path d="M5.800 9.200L1 14" stroke="#222" stroke-width="1.700"/></svg>
<div class="t" style="left:89.5px;top:1173px;font-size:14px;color:#1f1f1f;transform:scaleX(1.022);transform-origin:0 50%;">Type here to search</div>
<svg class="a" style="left:407.0px;top:1173.0px;" width="17" height="14" viewBox="0 0 17 14"><rect x="3" y="3.500" width="9" height="7" stroke="#fff" stroke-width="1.500" fill="none"/><path d="M15 1v12M12.500 1.500h3M12.500 12.500h3M.8 5v4" stroke="#fff" stroke-width="1.500" fill="none"/></svg>
<div class="a" style="left:442.5px;top:1158.2px;width:48.5px;height:41.8px;background:#343434;"></div>
<div class="a" style="left:442.5px;top:1198.0px;width:48.5px;height:2.0px;background:#8ab4e8;"></div>
<svg class="a" style="left:455.5px;top:1167.0px;" width="24" height="24" viewBox="0 0 24 24"><defs><linearGradient id="eg" x1="0" y1="0" x2="1" y2="1"><stop offset="0" stop-color="#35c1a0"/><stop offset=".5" stop-color="#1a8fd8"/><stop offset="1" stop-color="#0b5bb5"/></linearGradient></defs><circle cx="12" cy="12" r="11" fill="url(#eg)"/><path d="M3 14c0-6 5-9 10-8 5 1 8 5 6 8h-9c0 3 3 5 7 4-4 4-14 3-14-4z" fill="#0c3f86" opacity=".75"/><path d="M2 10C4 3 14 0 20 6c-5-3-12-2-13 4z" fill="#7ee08a" opacity=".85"/></svg>
<svg class="a" style="left:504.8px;top:1171.0px;" width="22" height="18" viewBox="0 0 22 18"><path d="M1 3h7l2 2h11v12H1z" fill="#f5c33b"/><path d="M1 7h20v10H1z" fill="#ffd961"/><rect x="6" y="10" width="10" height="7" fill="#3d8fe0"/></svg>
<svg class="a" style="left:552.0px;top:1167.0px;" width="26" height="26" viewBox="0 0 22 22"><path d="M11 1l10 10-10 10L1 11z" fill="#2d2d2d" stroke="#f0f0f0" stroke-width="1.400"/><path d="M11 3l4 4-4 4-4-4z" fill="#f2a33a"/><path d="M15 7l4 4-4 4-4-4z" fill="#3fb950"/><path d="M7 7l4 4-4 4-4-4z" fill="#3d8fe0"/><path d="M11 11l4 4-4 4-4-4z" fill="#e5484d"/></svg>
<svg class="a" style="left:604.5px;top:1169.0px;" width="20" height="22" viewBox="0 0 20 22"><rect x="2" y="1" width="10" height="14" fill="#f2d43a"/><path d="M9 8l9-5-3 9-4 9-5-3z" fill="#5aa02c"/><path d="M3 14l6 2-4 5z" fill="#c9a227"/></svg>
<svg class="a" style="left:652.0px;top:1169.0px;" width="22" height="22" viewBox="0 0 22 22"><rect x="1" y="1" width="11" height="11" fill="#4aa3df"/><rect x="6" y="6" width="11" height="11" fill="#8bc34a"/><rect x="10" y="10" width="11" height="11" fill="#9fb8d9"/></svg>
<div class="a" style="left:692.5px;top:1198.0px;width:42.0px;height:2.0px;background:#9a9a9a;"></div>
<svg class="a" style="left:701.5px;top:1170.0px;" width="22" height="20" viewBox="0 0 22 20"><path d="M16 0l6 3v14l-6 3-10-8-4 3-2-1V6l2-1 4 3zM16 6l-6 4 6 4zM3 8v4l2-2z" fill="#a67af4"/></svg>
<svg class="a" style="left:1701.5px;top:1177.5px;" width="10" height="6" viewBox="0 0 10 6"><path d="M1 5l4-4 4 4" stroke="#fff" stroke-width="1.300" fill="none"/></svg>
<svg class="a" style="left:1724.8px;top:1174.5px;" width="13" height="12" viewBox="0 0 13 12"><rect x="1" y="1" width="11" height="7.500" stroke="#fff" stroke-width="1.300" fill="none"/><path d="M4 11h5M6.500 8.500v2.500" stroke="#fff" stroke-width="1.300"/></svg>
<svg class="a" style="left:1748.0px;top:1174.5px;" width="12" height="12" viewBox="0 0 12 12"><path d="M1 4h2.500l3-3v10l-3-3H1z" fill="#fff"/><circle cx="9" cy="8" r="2.800" fill="#e5243b"/></svg>
<div class="t" style="left:1772.5px;top:1166px;font-size:11px;color:#fff;transform:scaleX(0.933);transform-origin:0 50%;">ENG</div>
<div class="t" style="left:1775.0px;top:1183px;font-size:11px;color:#fff;transform:scaleX(0.890);transform-origin:0 50%;">PLP</div>
<div class="t" style="left:1810.8px;top:1166px;font-size:11px;color:#fff;transform:scaleX(1.019);transform-origin:0 50%;">12:47 PM</div>
<div class="t" style="left:1809.2px;top:1183px;font-size:11px;color:#fff;transform:scaleX(1.047);transform-origin:0 50%;">1/30/2025</div>
<svg class="a" style="left:1878.5px;top:1172.5px;" width="16" height="15" viewBox="0 0 16 15"><path d="M1 1h14v10H8l-3 3v-3H1z" stroke="#fff" stroke-width="1.300" fill="none" stroke-linejoin="round"/></svg>
<div class="a" style="left:1913.0px;top:1158.2px;width:1.0px;height:41.8px;background:#555;"></div>
</div>
</body>
</html>
